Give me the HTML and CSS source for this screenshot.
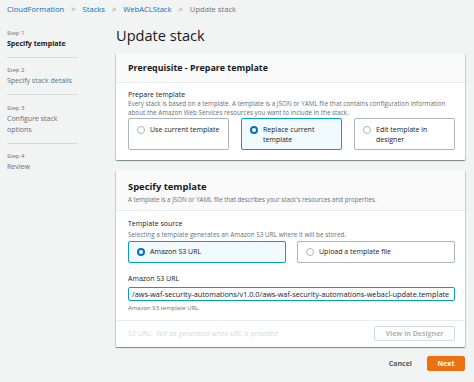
FILE: index.html
```html
<!DOCTYPE html>
<html>
<head>
<meta charset="utf-8">
<link rel="stylesheet" href="styles.css">
</head>
<body>
<nav class="crumbs">
  <a>CloudFormation</a><span class="sep">&gt;</span><a>Stacks</a><span class="sep">&gt;</span><a>WebACLStack</a><span class="sep">&gt;</span><span class="cur">Update stack</span>
</nav>
<div class="layout">
  <aside class="steps">
    <div class="step"><div class="step-no">Step 1</div><div class="step-title active">Specify template</div></div>
    <div class="step"><div class="step-no">Step 2</div><div class="step-title">Specify stack details</div></div>
    <div class="step"><div class="step-no">Step 3</div><div class="step-title">Configure stack<br>options</div></div>
    <div class="step last"><div class="step-no">Step 4</div><div class="step-title">Review</div></div>
  </aside>
  <main class="main">
    <h1 class="title">Update stack</h1>
    <section class="card">
      <div class="card-head one"><h2>Prerequisite - Prepare template</h2></div>
      <div class="card-body">
        <div class="label">Prepare template</div>
        <div class="desc">Every stack is based on a template. A template is a JSON or YAML file that contains configuration information<br>about the Amazon Web Services resources you want to include in the stack.</div>
        <div class="tiles three">
          <div class="tile"><span class="radio"></span><span class="tile-text">Use current template</span></div>
          <div class="tile sel"><span class="radio on"></span><span class="tile-text">Replace current<br>template</span></div>
          <div class="tile"><span class="radio"></span><span class="tile-text">Edit template in<br>designer</span></div>
        </div>
      </div>
    </section>
    <section class="card second">
      <div class="card-head two"><h2>Specify template</h2><div class="desc">A template is a JSON or YAML file that describes your stack's resources and properties.</div></div>
      <div class="card-body b2">
        <div class="label">Template source</div>
        <div class="desc">Selecting a template generates an Amazon S3 URL where it will be stored.</div>
        <div class="tiles two-col">
          <div class="tile short sel"><span class="radio on"></span><span class="tile-text">Amazon S3 URL</span></div>
          <div class="tile short"><span class="radio"></span><span class="tile-text">Upload a template file</span></div>
        </div>
        <div class="label url-label">Amazon S3 URL</div>
        <div class="input"><span>/aws-waf-security-automations/v1.0.0/aws-waf-security-automations-webacl-update.template</span></div>
        <div class="desc hint">Amazon S3 template URL</div>
      </div>
      <div class="card-foot">
        <span class="s3"><span class="s3-key">S3 URL:</span>&nbsp; Will be generated when URL is provided</span>
        <button class="btn-dis">View in Designer</button>
      </div>
    </section>
    <div class="actions">
      <button class="btn-link">Cancel</button>
      <button class="btn-primary">Next</button>
    </div>
  </main>
</div>
</body>
</html>
```
FILE: styles.css
```css
* { box-sizing: border-box; }
html, body { margin: 0; padding: 0; }
body {
  width: 474px;
  height: 382px;
  overflow: hidden;
  background: #f2f3f3;
  font-family: "Open Sans", "Noto Sans", sans-serif;
  color: #16191f;
}
.crumbs {
  height: 18px;
  padding: 0 7px;
  display: flex;
  align-items: center;
  font-size: 7.6px;
  white-space: nowrap;
}
.crumbs a { color: #0073bb; }
.crumbs .sep { color: #879596; margin: 0 7px; font-size: 7.6px; }
.crumbs .cur { color: #687078; }

.layout { display: flex; }
.steps {
  width: 70px;
  margin-left: 7px;
  padding-top: 2px;
}
.step {
  padding: 8.5px 0 8px;
  border-bottom: 1px solid #d5dbdb;
}
.step.last { border-bottom: none; }
.step-no { font-size: 6px; line-height: 9px; color: #687078; }
.step-title { font-size: 7px; line-height: 11px; color: #687078; }
.step-title.active { color: #16191f; font-weight: 700; }

.main {
  margin-left: 39px;
  width: 349px;
  padding-top: 7px;
}
.title {
  margin: 0 0 8px;
  font-size: 14.6px;
  line-height: 20px;
  font-weight: 400;
  color: #16191f;
}
.card {
  background: #fff;
  box-shadow: 0 1px 1px 0 rgba(0,28,36,.3), 1px 1px 1px 0 rgba(0,28,36,.15), -1px 1px 1px 0 rgba(0,28,36,.15);
  border-radius: 1px;
}
.card.second { margin-top: 10px; }
.card-head {
  background: #fafafa;
  border-bottom: 1px solid #eaeded;
  padding: 0 10px 0 12px;
}
.card-head h2 {
  margin: 0;
  font-size: 8.9px;
  font-weight: 700;
  color: #16191f;
}
.card-head.one { height: 30px; display: flex; align-items: center; }
.card-head.two { height: 41px; padding-top: 11px; }
.card-head.two h2 { line-height: 12px; font-size: 9.4px; }
.card-head.two .desc { margin-top: 2px; font-size: 6.2px; }

.card-body { padding: 6.5px 10px 10px 12px; }
.card-body.b2 { padding: 8px 10px 6.5px 12px; border-bottom: 1px solid #eaeded; }
.label { font-size: 7px; line-height: 9px; color: #16191f; }
.desc { font-size: 6.3px; line-height: 9px; color: #687078; white-space: nowrap; }
.b2 .desc { margin-top: 2px; font-size: 6.4px; }
.b2 .desc.hint { margin-top: 3.5px; font-size: 6px; }
.url-label { margin-top: 11.5px; }

.tiles { display: grid; margin-top: 1.5px; }
.tiles.three { grid-template-columns: 1fr 1fr 1fr; column-gap: 12px; }
.tiles.two-col { grid-template-columns: 1fr 1fr; column-gap: 11px; }
.tile {
  height: 32px;
  border: 1px solid #aab7b8;
  border-radius: 2px;
  display: flex;
  align-items: flex-start;
  padding: 6px 7px 0 8px;
  font-size: 7px;
  line-height: 10px;
  color: #16191f;
}
.tile.sel { background: #f1faff; border-color: #00a1c9; }
.tile.short { height: 22px; padding-top: 5px; }
.radio {
  width: 8px;
  height: 8px;
  border: 1px solid #aab7b8;
  border-radius: 50%;
  margin-top: 1px;
  margin-right: 5px;
  flex: none;
  background: #fff;
}
.radio.on {
  border: 2.5px solid #0073bb;
  background: #fff;
}
.tile-text { display: block; }

.input {
  margin-top: 3.5px;
  height: 14px;
  border: 1px solid #00a1c9;
  border-radius: 2px;
  display: flex;
  align-items: center;
  padding: 0 0 0 3px;
  white-space: nowrap;
  font-size: 7.3px;
  color: #16191f;
}

.card-foot {
  height: 26px;
  display: flex;
  align-items: center;
  justify-content: space-between;
  padding: 0 10px 0 12px;
}
.s3 { font-size: 7px; color: #d5dbdb; font-style: italic; }
.s3-key { font-style: normal; }
.btn-dis {
  width: 81px;
  height: 15px;
  border: 1px solid #d5dbdb;
  border-radius: 2px;
  background: #fff;
  color: #aab7b8;
  font-family: inherit;
  font-size: 7px;
  font-weight: 700;
  padding: 0;
}
.actions {
  margin-top: 9px;
  display: flex;
  justify-content: flex-end;
  align-items: center;
}
.btn-link {
  background: none;
  border: none;
  font-family: inherit;
  font-size: 7px;
  font-weight: 700;
  color: #545b64;
  padding: 0;
  margin-right: 15px;
}
.btn-primary {
  width: 38px;
  height: 15px;
  background: #ec7211;
  border: 1px solid #ec7211;
  border-radius: 2px;
  color: #fff;
  font-family: inherit;
  font-size: 7px;
  font-weight: 700;
  padding: 0;
}
```
